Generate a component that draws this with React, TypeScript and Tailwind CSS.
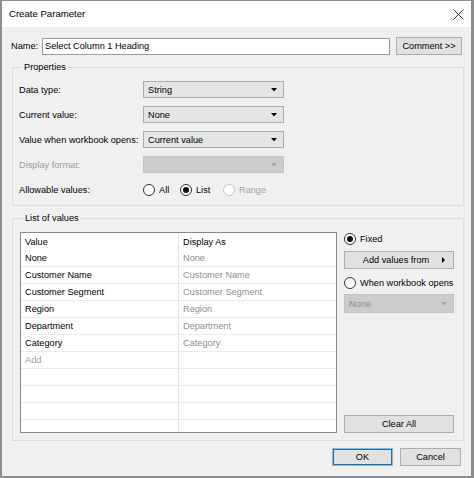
import React from 'react'

const font = "font-['Liberation_Sans','Noto_Sans',sans-serif]"

function Caret({ disabled }: { disabled?: boolean }) {
  return (
    <svg width="6" height="4" viewBox="0 0 6 4" className="shrink-0">
      <path d="M0 0 L6 0 L3 3.5 Z" fill={disabled ? '#a8a8a8' : '#000'} />
    </svg>
  )
}

function Select({ value, disabled, className = '' }: { value?: string; disabled?: boolean; className?: string }) {
  return (
    <div
      className={`flex items-center justify-between pl-[4px] pr-[6px] border ${
        disabled ? 'bg-[#cccccc] border-[#c4c4c4] text-[#8c8c8c]' : 'bg-[#e5e5e5] border-[#acacac] text-black'
      } ${className}`}
    >
      <span>{value}</span>
      <Caret disabled={disabled} />
    </div>
  )
}

function Radio({ checked, disabled, label }: { checked?: boolean; disabled?: boolean; label: string }) {
  return (
    <div className="flex items-center gap-[4px] whitespace-nowrap">
      <span
        className={`w-[12px] h-[12px] shrink-0 rounded-full border bg-white flex items-center justify-center ${
          disabled ? 'border-[#c2c2c2]' : 'border-[#333333]'
        }`}
      >
        {checked && <span className="w-[6px] h-[6px] rounded-full bg-[#111111]" />}
      </span>
      <span className={disabled ? 'text-[#a3a3a3]' : 'text-black'}>{label}</span>
    </div>
  )
}

function Button({ children, className = '' }: { children: React.ReactNode; className?: string }) {
  return (
    <div className={`flex items-center justify-center h-[18px] bg-[#e1e1e1] border border-[#adadad] text-black ${className}`}>
      {children}
    </div>
  )
}

const rows: [string, string][] = [
  ['None', 'None'],
  ['Customer Name', 'Customer Name'],
  ['Customer Segment', 'Customer Segment'],
  ['Region', 'Region'],
  ['Department', 'Department'],
  ['Category', 'Category'],
  ['Add', ''],
  ['', ''],
  ['', ''],
  ['', ''],
  ['', ''],
]

const props: [string, string, boolean][] = [
  ['Data type:', 'String', false],
  ['Current value:', 'None', false],
  ['Value when workbook opens:', 'Current value', false],
  ['Display format:', '', true],
]

export default function App() {
  return (
    <div className={`${font} text-[9.2px] leading-[12px] whitespace-nowrap w-[474px] h-[478px] flex flex-col border-l-2 border-r-[3px] border-b-2 border-t border-[#8d8d8d] bg-[#f0f0f0]`}>
      {/* title bar */}
      <div className="h-[26px] bg-white flex items-center justify-between pl-[7px] pr-[7px] shrink-0">
        <span className="text-[9.6px] text-black">Create Parameter</span>
        <svg width="11" height="11" viewBox="0 0 11 11">
          <path d="M0.5 0.5 L10.5 10.5 M10.5 0.5 L0.5 10.5" stroke="#222" strokeWidth="0.9" />
        </svg>
      </div>

      <div className="flex-1 flex flex-col pl-[9px]">
        {/* name row */}
        <div className="mt-[10px] h-[18px] flex items-center">
          <span className="w-[31px]">Name:</span>
          <div className="w-[348px] h-[17px] bg-white border border-[#9b9b9b] flex items-center pl-[2px]">
            Select Column 1 Heading
          </div>
          <Button className="ml-[6px] w-[66px]">Comment &gt;&gt;</Button>
        </div>

        {/* properties */}
        <fieldset className="mt-[6px] ml-[1px] w-[452px] border border-[#dcdcdc] pt-[8px] pb-[7px] pl-[6px]">
          <legend className="ml-[3px] px-[2px] leading-[12px]">Properties</legend>
          <div className="flex flex-col gap-[8px]">
            {props.map(([label, value, disabled]) => (
              <div key={label} className="h-[17px] flex items-center">
                <span className={`w-[124px] ${disabled ? 'text-[#9d9d9d]' : 'text-black'}`}>{label}</span>
                <Select value={value} disabled={disabled} className="w-[141px] h-[17px]" />
              </div>
            ))}
            <div className="h-[17px] flex items-center">
              <span className="w-[124px]">Allowable values:</span>
              <div className="w-[37px]">
                <Radio label="All" />
              </div>
              <div className="w-[43px]">
                <Radio label="List" checked />
              </div>
              <Radio label="Range" disabled />
            </div>
          </div>
        </fieldset>

        {/* list of values */}
        <fieldset className="mt-[6px] ml-[1px] w-[452px] border border-[#dcdcdc] pt-[8px] pb-[7px] pl-[7px]">
          <legend className="ml-[3px] px-[2px] leading-[12px]">List of values</legend>
          <div className="flex h-[201px]">
            <div className="w-[317px] h-full bg-white border border-[#8a8a8a] flex overflow-hidden">
              <div className="w-[158px] border-r border-[#e6e6e6] flex flex-col">
                <div className="h-[17px] shrink-0 flex items-center pl-[4px] text-black">Value</div>
                {rows.map(([v], i) => (
                  <div
                    key={i}
                    className={`h-[17px] shrink-0 flex items-center pl-[4px] border-b border-[#ececec] ${
                      v === 'Add' ? 'text-[#9a9a9a]' : 'text-black'
                    }`}
                  >
                    {v}
                  </div>
                ))}
              </div>
              <div className="flex-1 flex flex-col">
                <div className="h-[17px] shrink-0 flex items-center pl-[4px] text-black">Display As</div>
                {rows.map(([, d], i) => (
                  <div key={i} className="h-[17px] shrink-0 flex items-center pl-[4px] border-b border-[#ececec] text-[#8f8f8f]">
                    {d}
                  </div>
                ))}
              </div>
            </div>

            <div className="ml-[7px] w-[110px] flex flex-col">
              <div className="h-[13px] flex items-center">
                <Radio label="Fixed" checked />
              </div>
              <Button className="mt-[6px] relative">
                <span className="mr-[6px]">Add values from</span>
                <svg width="3" height="6" viewBox="0 0 3 6" className="absolute right-[8px] top-[5px]">
                  <path d="M0 0 L3 3 L0 6 Z" fill="#000" />
                </svg>
              </Button>
              <div className="mt-[8px] h-[12px] flex items-center">
                <Radio label="When workbook opens" />
              </div>
              <Select value="None" disabled className="mt-[5px] h-[19px]" />
              <Button className="mt-auto">Clear All</Button>
            </div>
          </div>
        </fieldset>

        {/* bottom buttons */}
        <div className="mt-[7px] ml-[1px] w-[452px] flex justify-end gap-[7px] pr-[3px]">
          <Button className="w-[61px] border-[#0078d7] shadow-[inset_0_0_0_1px_#0078d7]">OK</Button>
          <Button className="w-[61px]">Cancel</Button>
        </div>
      </div>
    </div>
  )
}
